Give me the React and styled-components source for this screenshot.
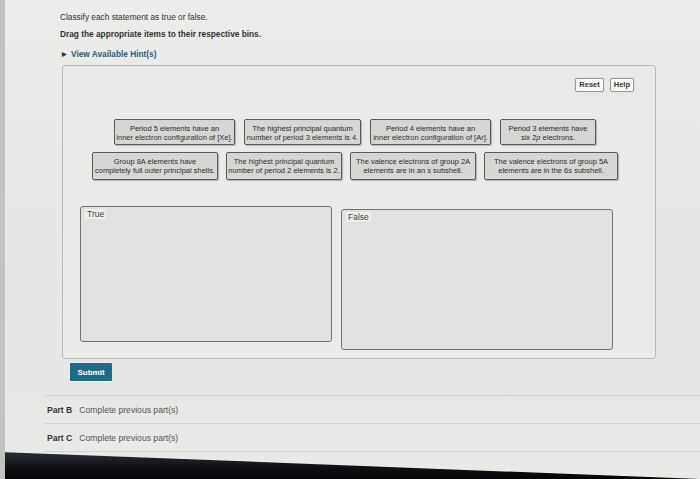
import React from "react";
import styled, { createGlobalStyle } from "styled-components";

const GlobalStyle = createGlobalStyle`
  html, body {
    margin: 0;
    padding: 0;
    background: #e7e7e5;
  }
  body {
    font-family: "Liberation Sans", Arial, sans-serif;
    color: #2b2b2b;
  }
`;

const Screen = styled.div`
  position: relative;
  width: 700px;
  height: 479px;
  overflow: hidden;
  box-sizing: border-box;
  border-left: 5px solid #c2c2c0;
  background: linear-gradient(180deg, #ececea 0%, #e6e6e4 60%, #e9e9e7 100%);
`;

const Intro = styled.div`
  padding: 12px 0 0 55px;
  display: flex;
  flex-direction: column;
  gap: 7px;
`;

const Line = styled.div`
  font-size: 8.3px;
  line-height: 10px;
  font-weight: ${(p) => (p.$bold ? 700 : 400)};
  color: #333;
`;

const Hint = styled.div`
  display: flex;
  align-items: center;
  gap: 4px;
  margin-top: 3px;
  padding-left: 2px;
  font-size: 8.3px;
  line-height: 10px;
  font-weight: 700;
  color: #2b5e7d;
  span {
    color: #333;
    font-size: 6px;
  }
`;

const Panel = styled.div`
  margin: 6px 0 0 57px;
  width: 594px;
  height: 294px;
  box-sizing: border-box;
  border: 1px solid #b7b7b5;
  border-radius: 3px;
  background: #eaeae8;
  display: flex;
  flex-direction: column;
`;

const Toolbar = styled.div`
  display: flex;
  justify-content: flex-end;
  gap: 6px;
  padding: 12px 21px 0 0;
`;

const ToolButton = styled.button`
  font-family: inherit;
  font-size: 7.5px;
  font-weight: 700;
  color: #333;
  background: #fafafa;
  border: 1px solid #9a9a9a;
  border-radius: 2px;
  height: 14px;
  padding: 0 3px;
  line-height: 12px;
  box-shadow: 0 0 0 1px #e0e0e0;
`;

const Items = styled.div`
  margin-top: 27px;
  display: flex;
  flex-direction: column;
  gap: 7px;
`;

const ItemRow = styled.div`
  display: flex;
  justify-content: center;
  gap: ${(p) => p.$gap}px;
  padding-right: 8px;
`;

const Item = styled.div`
  box-sizing: border-box;
  width: ${(p) => p.$w}px;
  height: ${(p) => p.$h}px;
  padding-top: 4px;
  background: #d6d6d4;
  border: 1px solid #5a5a5a;
  border-radius: 2px;
  box-shadow: 1px 1px 1px rgba(0, 0, 0, 0.25);
  font-size: 7.5px;
  line-height: 9px;
  text-align: center;
  white-space: nowrap;
  color: #2e2e2e;
  i {
    font-style: italic;
  }
`;

const Bins = styled.div`
  margin: 26px 0 0 17px;
  display: grid;
  grid-template-columns: 252px 272px;
  align-items: start;
  gap: 9px;
`;

const Bin = styled.div`
  height: ${(p) => p.$h}px;
  margin-top: ${(p) => p.$top}px;
  box-sizing: border-box;
  border: 1px solid #727272;
  border-radius: 3px;
  background: #e1e1df;
  padding: 2px 0 0 4px;
  font-size: 8.5px;
  line-height: 10px;
`;

const BinLabel = styled.div`
  width: fit-content;
  padding: 0 2px;
  color: #444;
  background: #eeeeec;
`;

const SubmitButton = styled.button`
  margin: 4px 0 0 65px;
  width: 42px;
  height: 18px;
  border: none;
  border-radius: 1px;
  background: #1e6a88;
  color: #fff;
  font-family: inherit;
  font-size: 8px;
  font-weight: 700;
  padding: 0;
`;

const Parts = styled.div`
  margin: 14px 0 0 40px;
  border-top: 1px solid #cfcfcd;
`;

const PartRow = styled.div`
  display: flex;
  align-items: center;
  gap: 7px;
  height: 27px;
  padding-left: 2px;
  border-bottom: 1px solid #d2d2d0;
  font-size: 8.6px;
  color: #555;
  b {
    color: #333;
  }
`;

const Bezel = styled.div`
  position: absolute;
  left: -5px;
  right: 0;
  bottom: 0;
  height: 27px;
  background: linear-gradient(180deg, #2a2f35 0%, #0d0f12 60%, #050607 100%);
  clip-path: polygon(0 0, 100% 100%, 0 100%);
`;

const rowOne = [
  { w: 121, a: "Period 5 elements have an", b: "inner electron configuration of [Xe]." },
  { w: 117, a: "The highest principal quantum", b: "number of period 3 elements is 4." },
  { w: 121, a: "Period 4 elements have an", b: "inner electron configuration of [Ar]." },
  {
    w: 96,
    a: "Period 3 elements have",
    b: (
      <>
        six 2<i>p</i> electrons.
      </>
    ),
  },
];

const rowTwo = [
  { w: 126, a: "Group 8A elements have", b: "completely full outer principal shells." },
  { w: 116, a: "The highest principal quantum", b: "number of period 2 elements is 2." },
  {
    w: 126,
    a: "The valence electrons of group 2A",
    b: (
      <>
        elements are in an <i>s</i> subshell.
      </>
    ),
  },
  {
    w: 134,
    a: "The valence electrons of group 5A",
    b: (
      <>
        elements are in the 6<i>s</i> subshell.
      </>
    ),
  },
];

export default function App() {
  return (
    <>
      <GlobalStyle />
      <Screen>
        <Intro>
          <Line>Classify each statement as true or false.</Line>
          <Line $bold>Drag the appropriate items to their respective bins.</Line>
          <Hint>
            <span>▶</span>View Available Hint(s)
          </Hint>
        </Intro>

        <Panel>
          <Toolbar>
            <ToolButton>Reset</ToolButton>
            <ToolButton>Help</ToolButton>
          </Toolbar>

          <Items>
            <ItemRow $gap={9}>
              {rowOne.map((it, i) => (
                <Item key={i} $w={it.w} $h={26}>
                  {it.a}
                  <br />
                  {it.b}
                </Item>
              ))}
            </ItemRow>
            <ItemRow $gap={8}>
              {rowTwo.map((it, i) => (
                <Item key={i} $w={it.w} $h={28}>
                  {it.a}
                  <br />
                  {it.b}
                </Item>
              ))}
            </ItemRow>
          </Items>

          <Bins>
            <Bin $h={136} $top={0}>
              <BinLabel>True</BinLabel>
            </Bin>
            <Bin $h={141} $top={3}>
              <BinLabel>False</BinLabel>
            </Bin>
          </Bins>
        </Panel>

        <SubmitButton>Submit</SubmitButton>

        <Parts>
          <PartRow>
            <b>Part B</b>
            <span>Complete previous part(s)</span>
          </PartRow>
          <PartRow>
            <b>Part C</b>
            <span>Complete previous part(s)</span>
          </PartRow>
        </Parts>

        <Bezel />
      </Screen>
    </>
  );
}
